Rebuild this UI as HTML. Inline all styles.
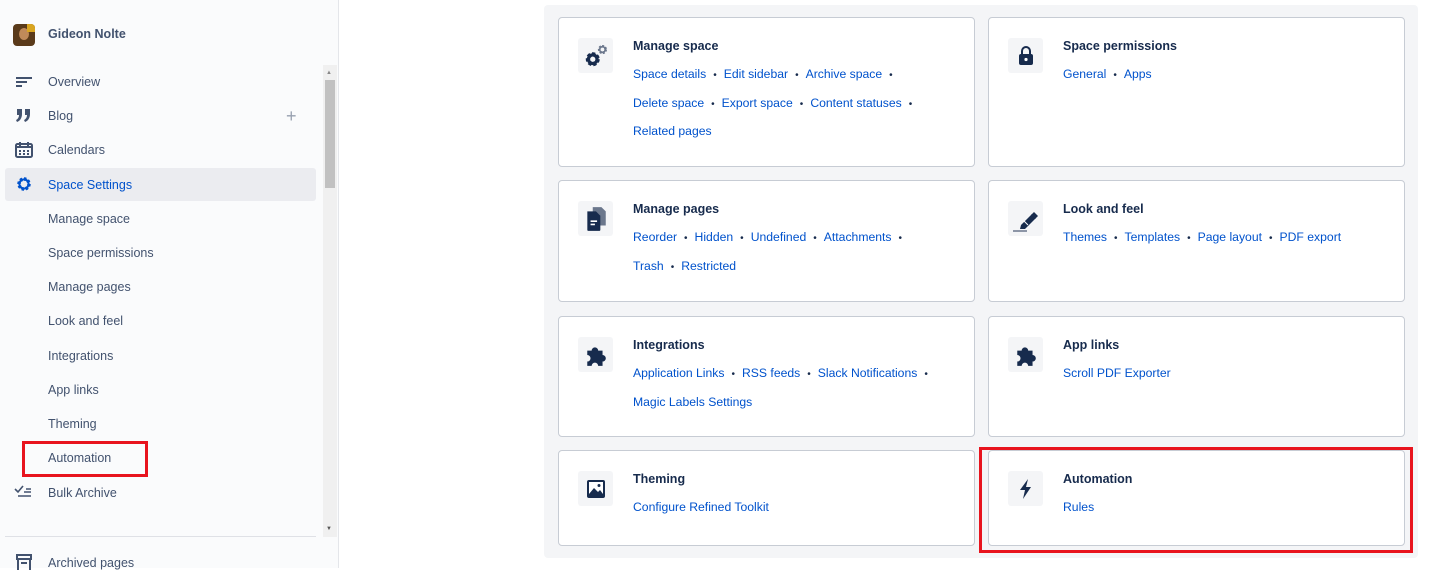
<!DOCTYPE html>
<html><head><style>
*{box-sizing:border-box;margin:0;padding:0}
body{width:1430px;height:568px;overflow:hidden;background:#fff;font-family:"Liberation Sans",sans-serif;position:relative;font-size:12.5px}
.sb{position:absolute;left:0;top:0;width:339px;height:568px;background:#fafbfc;border-right:1px solid #e4e6ea}
.it{position:absolute;left:48px;color:#42526e;font-size:12.5px;line-height:16px}
.ic{position:absolute;left:14px;width:20px;height:16px}
.hl{position:absolute;left:5px;top:168px;width:311px;height:33px;background:#ebecf0;border-radius:3px}
.panel{position:absolute;left:544px;top:5px;width:874px;height:553px;background:#f4f5f7;border-radius:4px}
.card{position:absolute;background:#fff;border:1px solid #c7ccd4;border-radius:4px}
.card .ib{position:absolute;left:19px;top:20px;width:35px;height:35px;background:#f4f5f7;border-radius:3px;display:flex;align-items:center;justify-content:center}
.card h4{position:absolute;left:74px;top:21px;font-size:12.5px;font-weight:bold;color:#172b4d}
.card .l{position:absolute;left:74px;top:43px;width:330px;line-height:27.5px;color:#0052cc;font-size:12.2px}
.l b{font-weight:normal;color:#172b4d;margin:0 7px;font-size:10px}
.red{position:absolute;border:3px solid #e8141e}
</style></head><body>
<div class="sb">
 <div style="position:absolute;left:13px;top:24px;width:22px;height:22px;border-radius:4px;background:#5a3a1a;overflow:hidden"><div style="position:absolute;left:6px;top:4px;width:10px;height:12px;border-radius:50%;background:#c08a5a"></div><div style="position:absolute;left:14px;top:0;width:8px;height:8px;background:#d9a520"></div></div>
 <div class="it" style="top:26px;font-weight:bold;color:#42526e">Gideon Nolte</div>
 <div class="hl"></div>
 <svg class="ic" style="top:74px" viewBox="0 0 20 16"><path d="M2 4h16M2 8h11M2 12h6" stroke="#42526e" stroke-width="2"/></svg>
 <div class="it" style="top:74px">Overview</div>
 <svg class="ic" style="top:108px" viewBox="0 0 20 16"><path d="M3 1h5v5c0 4-2 7-5 8l-1-2c2-1 3-3 3-5H3zM11 1h5v5c0 4-2 7-5 8l-1-2c2-1 3-3 3-5h-2z" fill="#42526e"/></svg>
 <div class="it" style="top:108px">Blog</div>
 <div style="position:absolute;left:286px;top:106px;color:#97a0af;font-size:18px">+</div>
 <svg class="ic" style="top:142px" viewBox="0 0 20 16"><rect x="2" y="2" width="16" height="13" rx="1.5" fill="none" stroke="#42526e" stroke-width="2"/><path d="M2 5h16" stroke="#42526e" stroke-width="2"/><path d="M6 0v4M14 0v4" stroke="#42526e" stroke-width="2"/><g fill="#42526e"><rect x="5" y="8" width="2" height="2"/><rect x="9" y="8" width="2" height="2"/><rect x="13" y="8" width="2" height="2"/><rect x="5" y="11" width="2" height="2"/><rect x="9" y="11" width="2" height="2"/><rect x="13" y="11" width="2" height="2"/></g></svg>
 <div class="it" style="top:142px">Calendars</div>
 <svg class="ic" style="top:176px" viewBox="0 0 20 16"><circle cx="10" cy="8" r="5" fill="none" stroke="#0052cc" stroke-width="3.5" stroke-dasharray="2.2 1.7"/><circle cx="10" cy="8" r="4.6" fill="none" stroke="#0052cc" stroke-width="2"/></svg>
 <div class="it" style="top:177px;color:#0052cc">Space Settings</div>
 <div class="it" style="top:211px">Manage space</div>
 <div class="it" style="top:245px">Space permissions</div>
 <div class="it" style="top:279px">Manage pages</div>
 <div class="it" style="top:313px">Look and feel</div>
 <div class="it" style="top:348px">Integrations</div>
 <div class="it" style="top:382px">App links</div>
 <div class="it" style="top:416px">Theming</div>
 <div class="it" style="top:450px">Automation</div>
 <svg class="ic" style="top:484px" viewBox="0 0 20 16"><path d="M1 5l3 3 5-6M10 8h7M4 12h13M12 5h5" stroke="#42526e" stroke-width="1.6" fill="none"/></svg>
 <div class="it" style="top:485px">Bulk Archive</div>
 <div style="position:absolute;left:5px;top:536px;width:311px;height:1px;background:#dfe1e6"></div>
 <svg class="ic" style="top:554px" viewBox="0 0 20 16"><rect x="3" y="1" width="14" height="4" fill="none" stroke="#42526e" stroke-width="2"/><path d="M4 5v11M16 5v11M7 9h6" stroke="#42526e" stroke-width="2"/></svg>
 <div class="it" style="top:555px">Archived pages</div>
 <div style="position:absolute;left:323px;top:65px;width:14px;height:472px;background:#f0f0f0"></div>
 <div style="position:absolute;left:325px;top:80px;width:10px;height:108px;background:#c1c1c1"></div>
 <div style="position:absolute;left:326px;top:70px;font-size:6px;color:#888">▲</div>
 <div style="position:absolute;left:326px;top:526px;font-size:6px;color:#555">▼</div>
</div>
<div class="red" style="left:22px;top:441px;width:126px;height:36px"></div>

<div class="panel"></div>
<div class="card" style="left:558px;top:17px;width:417px;height:150px">
 <div class="ib"><svg width="28" height="28" viewBox="0 0 26 26"><circle cx="10" cy="16" r="4.5" fill="none" stroke="#172b4d" stroke-width="4" stroke-dasharray="2.5 1.6"/><circle cx="10" cy="16" r="4" fill="none" stroke="#172b4d" stroke-width="3"/><circle cx="19" cy="7" r="3" fill="none" stroke="#6b778c" stroke-width="2.5" stroke-dasharray="1.6 1.1"/><circle cx="19" cy="7" r="2.6" fill="none" stroke="#6b778c" stroke-width="1.5"/></svg></div>
 <h4>Manage space</h4>
 <div class="l">Space details<b>•</b>Edit sidebar<b>•</b>Archive space<b>•</b><br>Delete space<b>•</b>Export space<b>•</b>Content statuses<b>•</b><br>Related pages</div>
</div>
<div class="card" style="left:988px;top:17px;width:417px;height:150px">
 <div class="ib"><svg width="20" height="22" viewBox="0 0 20 22"><path d="M6 9V6a4 4 0 0 1 8 0v3" fill="none" stroke="#172b4d" stroke-width="2"/><rect x="3" y="9" width="14" height="11" rx="2" fill="#172b4d"/><circle cx="10" cy="14.5" r="1.6" fill="#fff"/></svg></div>
 <h4>Space permissions</h4>
 <div class="l">General<b>•</b>Apps</div>
</div>
<div class="card" style="left:558px;top:180px;width:417px;height:122px">
 <div class="ib"><svg width="24" height="26" viewBox="0 0 22 24"><path d="M8 1h8l4 4v13h-12z" fill="#6b778c"/><path d="M3 5h8l4 4v13a1 1 0 0 1-1 1H4a1 1 0 0 1-1-1z" fill="#172b4d"/><path d="M6 14h6M6 17h4" stroke="#fff" stroke-width="1.5"/></svg></div>
 <h4>Manage pages</h4>
 <div class="l">Reorder<b>•</b>Hidden<b>•</b>Undefined<b>•</b>Attachments<b>•</b><br>Trash<b>•</b>Restricted</div>
</div>
<div class="card" style="left:988px;top:180px;width:417px;height:122px">
 <div class="ib"><svg width="30" height="26" viewBox="0 0 30 26"><path d="M10 19l11-11 4 4-11 11H9z" fill="#172b4d"/><path d="M20 9l3-3 4 4-3 3z" fill="#172b4d"/><path d="M13 15l4 4" stroke="#fff" stroke-width="1"/><path d="M2 25h14" stroke="#6b778c" stroke-width="1.5"/></svg></div>
 <h4>Look and feel</h4>
 <div class="l">Themes<b>•</b>Templates<b>•</b>Page layout<b>•</b>PDF export</div>
</div>
<div class="card" style="left:558px;top:316px;width:417px;height:121px">
 <div class="ib"><svg width="24" height="24" viewBox="0 0 22 22"><path d="M3 7h4a3 3 0 1 1 6 0h4v4a3 3 0 1 1 0 6v4h-4a3 3 0 1 0-6 0H3v-4a3 3 0 1 0 0-6z" fill="#172b4d"/></svg></div>
 <h4>Integrations</h4>
 <div class="l">Application Links<b>•</b>RSS feeds<b>•</b>Slack Notifications<b>•</b><br>Magic Labels Settings</div>
</div>
<div class="card" style="left:988px;top:316px;width:417px;height:121px">
 <div class="ib"><svg width="24" height="24" viewBox="0 0 22 22"><path d="M3 7h4a3 3 0 1 1 6 0h4v4a3 3 0 1 1 0 6v4h-4a3 3 0 1 0-6 0H3v-4a3 3 0 1 0 0-6z" fill="#172b4d"/></svg></div>
 <h4>App links</h4>
 <div class="l">Scroll PDF Exporter</div>
</div>
<div class="card" style="left:558px;top:450px;width:417px;height:96px">
 <div class="ib"><svg width="22" height="22" viewBox="0 0 22 22"><rect x="2" y="2" width="18" height="18" rx="2" fill="#172b4d"/><rect x="4" y="4" width="14" height="12" fill="#fff"/><path d="M4 16l5-6 4 4 2-2 3 4z" fill="#172b4d"/><circle cx="14" cy="7.5" r="1.5" fill="#172b4d"/></svg></div>
 <h4>Theming</h4>
 <div class="l">Configure Refined Toolkit</div>
</div>
<div class="card" style="left:988px;top:450px;width:417px;height:96px">
 <div class="ib"><svg width="14" height="20" viewBox="0 0 14 20"><path d="M9 0L1 11h5l-2 9 8-12H7z" fill="#172b4d"/></svg></div>
 <h4>Automation</h4>
 <div class="l">Rules</div>
</div>
<div class="red" style="left:979px;top:447px;width:434px;height:106px"></div>
</body></html>
